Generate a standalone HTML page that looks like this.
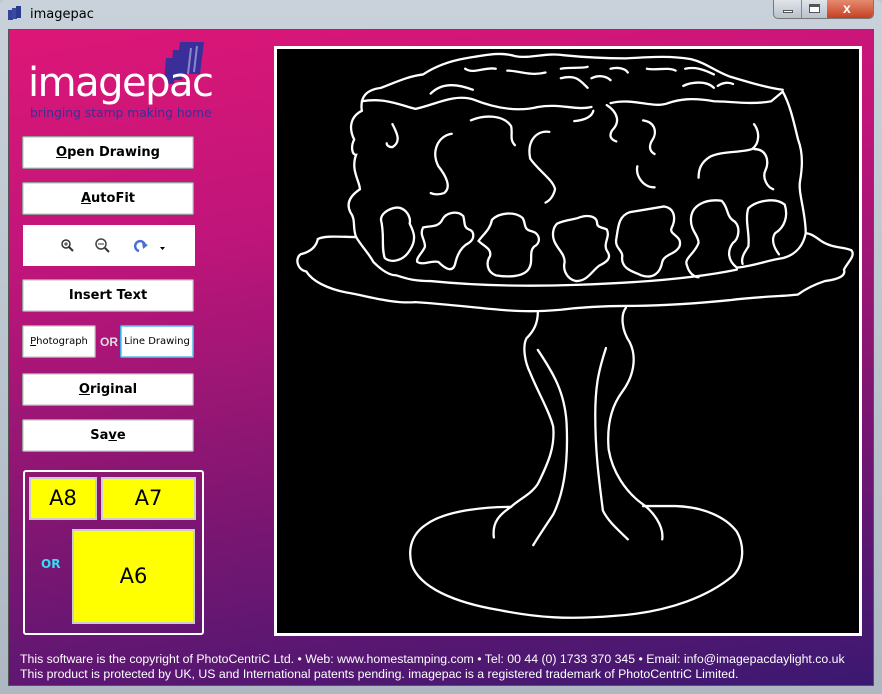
<!DOCTYPE html>
<html><head><meta charset="utf-8"><style>
*{margin:0;padding:0;box-sizing:border-box}
body{width:882px;height:694px;overflow:hidden;background:#bfc7cf;font-family:"Liberation Sans",sans-serif;position:relative}
.frame{position:absolute;left:0;top:0;width:882px;height:694px;background:linear-gradient(#c9d2da,#aeb8c2);border-radius:6px 6px 0 0}
.title{position:absolute;left:30px;top:7px;font-size:13px;color:#000;font-family:"DejaVu Sans",sans-serif}
.client{position:absolute;left:8px;top:29px;width:866px;height:657px;background:linear-gradient(170deg,#dd1677 0%,#c0157a 30%,#861672 60%,#3a1871 100%);border:1px solid #555}
.btn{position:absolute;left:22px;width:172px;height:33px;background:#fff;border:1px solid #999;border-radius:2px;box-shadow:inset 0 0 0 1px #ddd;font-weight:bold;font-size:13px;text-align:center;line-height:31px;font-family:"DejaVu Sans",sans-serif;color:#000}
.small{font-weight:normal;font-size:10px}
.yel{position:absolute;background:#ff0;border:2px solid #ccc;text-align:center;font-family:"DejaVu Sans",sans-serif;color:#000}
.foot{position:absolute;left:20px;color:#fff;font-size:12.3px}
</style></head><body>
<div class="frame"></div>
<svg style="position:absolute;left:8px;top:6px" width="14" height="14"><rect x="0" y="4" width="5" height="10" fill="#334499"/><rect x="4" y="2" width="5" height="11" fill="#3a4aa0"/><rect x="8" y="0" width="5" height="12" fill="#2a3a90"/></svg>
<div class="title">imagepac</div>
<div style="position:absolute;left:773px;top:0;width:101px;height:19px;border:1px solid #777;border-top:none;border-radius:0 0 5px 5px;background:linear-gradient(#e0e5ea,#b8c2cc);overflow:hidden">
<div style="position:absolute;left:27px;top:0;width:1px;height:19px;background:#888"></div>
<div style="position:absolute;left:53px;top:0;width:47px;height:19px;background:linear-gradient(#e58a70,#c43c1e)"></div>
<div style="position:absolute;left:9px;top:10px;width:10px;height:3px;background:#fff;border:1px solid #555"></div>
<div style="position:absolute;left:35px;top:4px;width:11px;height:9px;border:1px solid #555;background:#fff;box-shadow:inset 0 2px 0 #555"></div>
<div style="position:absolute;left:69px;top:0;color:#fff;font-weight:bold;font-size:14px">x</div>
</div>
<div class="client"></div>
<svg style="position:absolute;left:158px;top:40px" width="50" height="50"><polygon points="8,18 18,18 16,44 6,44" fill="#3a2f98"/><polygon points="15,10 26,10 24,40 13,40" fill="#3a2f98"/><polygon points="22,2 46,2 42,34 18,34" fill="#3a2f98"/><line x1="33" y1="8" x2="30" y2="34" stroke="#8888cc" stroke-width="2"/><line x1="39" y1="6" x2="36" y2="32" stroke="#8888cc" stroke-width="2"/></svg>
<div style="position:absolute;left:28px;top:60px;font-size:40px;color:#fff;font-family:'DejaVu Sans',sans-serif;letter-spacing:-1.5px;line-height:46px">imagepac</div>
<div style="position:absolute;left:30px;top:106px;font-size:12.3px;color:#3b2f96;font-family:'DejaVu Sans',sans-serif">bringing stamp making home</div>
<div class="btn" style="top:136px"><u>O</u>pen Drawing</div>
<div class="btn" style="top:182px"><u>A</u>utoFit</div>
<div style="position:absolute;left:23px;top:225px;width:172px;height:41px;background:#fff">
<svg width="172" height="41"><circle cx="43" cy="19" r="4" fill="none" stroke="#333" stroke-width="1.5"/><line x1="46" y1="22" x2="50" y2="26" stroke="#333" stroke-width="2"/><line x1="41" y1="19" x2="45" y2="19" stroke="#333"/><line x1="43" y1="17" x2="43" y2="21" stroke="#333"/>
<circle cx="78" cy="19" r="5" fill="none" stroke="#444" stroke-width="1.5"/><line x1="82" y1="23" x2="86" y2="27" stroke="#333" stroke-width="2"/><line x1="75" y1="19" x2="81" y2="19" stroke="#333"/>
<path d="M116 26 A5 5 0 1 1 122 20" fill="none" stroke="#4a6fd0" stroke-width="2.5"/><polygon points="119,17 125,20 120,24" fill="#4a6fd0"/><polygon points="137,22 142,22 139.5,25" fill="#000"/></svg></div>
<div class="btn" style="top:279px">Insert Text</div>
<div class="btn small" style="top:325px;width:74px;line-height:31px"><u>P</u>hotograph</div>
<div style="position:absolute;left:100px;top:335px;color:#ddd;font-weight:bold;font-size:12px">OR</div>
<div class="btn small" style="top:325px;left:120px;width:74px;border:1px solid #3ab0e0;box-shadow:inset 0 0 0 1px #7fd0f0">Line Drawing</div>
<div class="btn" style="top:373px"><u>O</u>riginal</div>
<div class="btn" style="top:419px">Sa<u>v</u>e</div>
<div style="position:absolute;left:23px;top:470px;width:181px;height:165px;border:2px solid #fff;border-radius:3px"></div>
<div class="yel" style="left:29px;top:477px;width:68px;height:43px;font-size:21px;line-height:39px">A8</div>
<div class="yel" style="left:101px;top:477px;width:95px;height:43px;font-size:21px;line-height:39px">A7</div>
<div style="position:absolute;left:41px;top:557px;color:#33e0f0;font-weight:bold;font-size:12px;font-family:'DejaVu Sans',sans-serif">OR</div>
<div class="yel" style="left:72px;top:529px;width:123px;height:95px;font-size:21px;line-height:91px">A6</div>
<div style="position:absolute;left:274px;top:46px;width:588px;height:590px;background:#000;border:3px solid #fff"></div>
<svg style="position:absolute;left:270px;top:40px" width="600" height="600" viewBox="0 0 1568 1568" fill="none" stroke="#fff" stroke-width="6" stroke-linecap="round">
<path d="M240 185 C235 150 250 130 290 125 C330 110 360 95 400 90 C430 70 470 55 510 48 C560 40 600 30 640 42 C680 50 720 32 770 40 C820 45 880 48 930 48 C990 45 1040 40 1100 50 C1140 60 1160 80 1200 95 C1250 110 1300 125 1340 130"/>
<path d="M240 160 C300 150 340 170 380 180 C430 170 480 140 530 155 C580 175 640 190 700 175 C760 165 800 185 840 175"/>
<path d="M890 165 C950 150 1000 180 1040 165 C1070 155 1100 150 1160 160 C1200 160 1260 170 1310 160 L1340 135"/>
<path d="M240 185 C210 200 205 230 220 260 C210 280 215 300 225 300 C210 340 235 370 235 390 C220 400 195 420 210 450 C225 470 215 490 225 515 C190 515 145 510 125 520 C120 545 100 555 80 560 C65 570 70 600 95 605 C110 630 150 650 200 660 C260 670 320 690 380 685 C460 690 540 700 600 705 C660 710 700 710 760 705 C800 700 850 695 930 695 C1000 695 1100 690 1200 680 C1280 670 1340 670 1380 665 C1400 650 1420 640 1450 630 C1490 625 1505 615 1500 600 C1510 580 1530 565 1520 550 C1500 540 1470 545 1440 525 C1420 510 1410 505 1400 505"/>
<path d="M1340 135 C1360 170 1370 220 1380 260 C1395 300 1390 340 1385 370 C1380 400 1400 450 1400 505 C1395 530 1380 560 1340 570 C1300 575 1270 590 1220 595"/>
<path d="M225 515 C240 540 260 560 270 580 C290 600 310 615 330 615 C360 625 380 630 420 630 C520 640 650 645 800 640 C950 635 1100 625 1220 600"/>
<path d="M320 440 C350 430 370 460 365 480 C375 500 385 520 365 550 C350 575 320 585 300 570 C290 540 300 510 290 470 C290 455 305 445 320 440Z"/>
<path d="M400 490 C420 485 440 490 450 470 C460 450 490 445 505 460 C510 475 505 490 520 495 C535 500 535 520 520 530 C500 540 490 560 485 580 C480 610 460 600 440 580 C420 575 400 590 385 580 C380 570 400 555 405 540 C405 520 390 510 400 490Z"/>
<path d="M580 470 C600 450 640 448 660 465 C670 480 660 495 685 500 C705 505 710 530 690 540 C675 555 690 580 675 600 C660 620 620 620 590 615 C565 605 565 580 575 565 C580 545 560 540 545 525 C560 505 575 495 580 470Z"/>
<path d="M750 480 C770 470 790 470 805 465 C830 455 855 460 855 480 C855 490 870 490 880 495 C890 515 870 530 880 550 C895 570 880 580 860 590 C840 605 830 630 800 630 C775 625 765 600 770 580 C770 560 755 550 745 530 C735 510 740 490 750 480Z"/>
<path d="M940 450 C970 445 1000 440 1030 435 C1060 440 1060 470 1050 490 C1040 510 1080 510 1070 540 C1060 560 1030 560 1025 580 C1020 610 1000 625 970 615 C950 605 920 600 920 570 C925 550 900 545 905 520 C910 490 910 460 940 450Z"/>
<path d="M1100 470 C1100 430 1140 415 1180 420 C1200 440 1190 460 1215 475 C1230 490 1225 520 1210 530 C1195 550 1195 575 1220 595 M1100 470 C1100 500 1120 510 1120 530 C1110 560 1080 570 1090 590 C1095 610 1110 620 1120 620"/>
<path d="M1250 440 C1270 420 1320 410 1345 430 C1355 460 1345 490 1320 505 C1310 520 1315 540 1330 560 M1250 440 C1240 470 1255 510 1250 540 C1240 555 1230 570 1235 585"/>
<path d="M320 220 C330 240 345 265 320 280 C310 280 305 275 305 270"/>
<path d="M475 245 C440 250 420 290 440 330 C460 355 475 385 455 400 C440 405 430 405 420 400"/>
<path d="M525 210 C560 195 610 195 630 225 C635 245 625 260 640 275"/>
<path d="M730 240 C700 235 670 260 680 310 C700 340 740 365 745 390 C740 410 730 420 720 425"/>
<path d="M795 212 C815 210 840 205 845 185"/>
<path d="M880 170 C910 190 915 215 895 235 C885 250 890 260 905 265"/>
<path d="M975 210 C1010 215 1010 245 1000 260 C990 275 990 290 1005 298"/>
<path d="M960 330 C955 355 975 385 1005 385"/>
<path d="M1265 220 C1280 240 1280 270 1260 285 C1230 295 1180 290 1150 305 C1125 320 1120 340 1120 360"/>
<path d="M1265 285 C1300 285 1305 320 1295 340 C1285 360 1300 385 1315 390"/>
<path d="M420 140 C450 110 490 115 530 130 M510 75 C530 90 560 70 590 75 M620 80 C650 80 680 95 720 85 M760 75 C790 70 820 75 830 70 M760 100 C800 90 810 105 830 125 M840 100 C860 90 880 95 890 105 M890 75 C910 70 930 75 935 85 M985 75 C1010 80 1040 70 1060 80 M1085 75 C1110 70 1130 75 1160 90 M1080 120 C1100 110 1140 105 1160 125 M1170 120 C1185 110 1200 110 1210 115"/>
<path d="M700 710 C700 740 690 760 670 780 C660 800 665 840 680 870 C700 920 730 970 740 1010 C745 1060 730 1100 700 1160 C680 1190 650 1200 630 1220 C600 1240 580 1260 585 1300"/>
<path d="M930 700 C915 720 920 760 940 790 C960 830 950 880 920 920 C890 960 880 1010 885 1070 C895 1130 930 1180 970 1210 C1000 1230 1030 1270 1025 1305"/>
<path d="M700 810 C740 870 770 920 775 1000 C780 1100 770 1180 740 1240 C720 1270 700 1300 688 1320"/>
<path d="M878 805 C860 860 850 900 850 980 C850 1080 860 1150 870 1230 C885 1260 910 1280 935 1305"/>
<path d="M630 1220 C560 1220 460 1230 410 1265 C370 1290 360 1330 370 1370 C390 1430 480 1470 600 1490 C700 1510 780 1515 900 1505 C1050 1495 1150 1450 1210 1400 C1240 1370 1240 1320 1220 1285 C1190 1245 1130 1220 1060 1218 L975 1218"/>
</svg>
<div class="foot" style="top:652px">This software is the copyright of PhotoCentriC Ltd. • Web: www.homestamping.com • Tel: 00 44 (0) 1733 370 345 • Email: info@imagepacdaylight.co.uk</div>
<div class="foot" style="top:667px">This product is protected by UK, US and International patents pending. imagepac is a registered trademark of PhotoCentriC Limited.</div>
</body></html>
